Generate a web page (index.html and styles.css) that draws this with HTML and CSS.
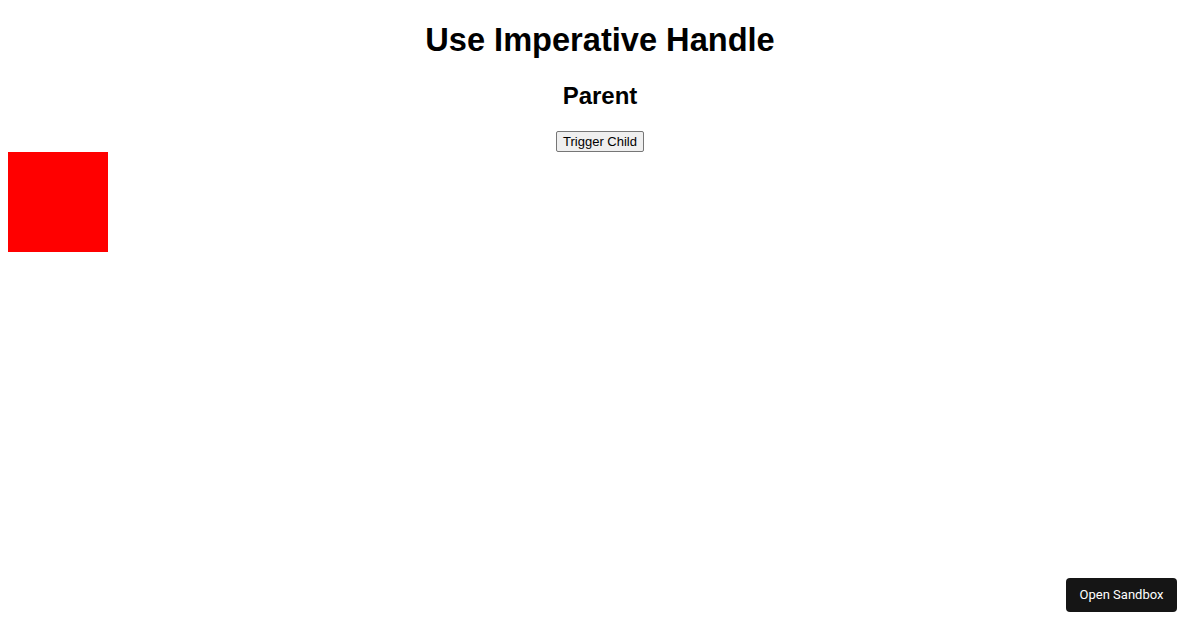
FILE: index.html
```html
<!DOCTYPE html>
<html>
<head>
<meta charset="utf-8">
<link rel="stylesheet" href="styles.css">
</head>
<body>
<div class="app">
  <h1>Use Imperative Handle</h1>
  <div class="parent">
    <h2>Parent</h2>
    <button class="trigger">Trigger Child</button>
    <div class="child"></div>
  </div>
</div>
<a class="sandbox">Open Sandbox</a>
</body>
</html>
```
FILE: styles.css
```css
body {
  margin: 0 8px 8px;
  font-family: "Liberation Sans", Arial, sans-serif;
  background: #fff;
  color: #000;
}
.app {
  text-align: center;
}
h1 {
  font-size: 32.6px;
  margin: 21px 0 23px;
}
h2 {
  font-size: 24px;
  margin: 0 0 21px;
}
.trigger {
  font-family: "Liberation Sans", Arial, sans-serif;
  font-size: 13px;
  line-height: 15px;
  padding: 2px 6px;
  border: 1px solid #767676;
  border-radius: 2px;
  background: #efefef;
  color: #000;
  display: inline-block;
  vertical-align: top;
  height: 21px;
  box-sizing: border-box;
}
.child {
  width: 100px;
  height: 100px;
  background: #ff0000;
}
.sandbox {
  position: fixed;
  right: 23px;
  bottom: 18px;
  width: 111px;
  height: 34px;
  box-sizing: border-box;
  display: flex;
  align-items: center;
  justify-content: center;
  padding-bottom: 1px;
  background: #151515;
  color: #fff;
  border-radius: 4px;
  font-family: Roboto, "Liberation Sans", sans-serif;
  font-size: 13px;
}
```
